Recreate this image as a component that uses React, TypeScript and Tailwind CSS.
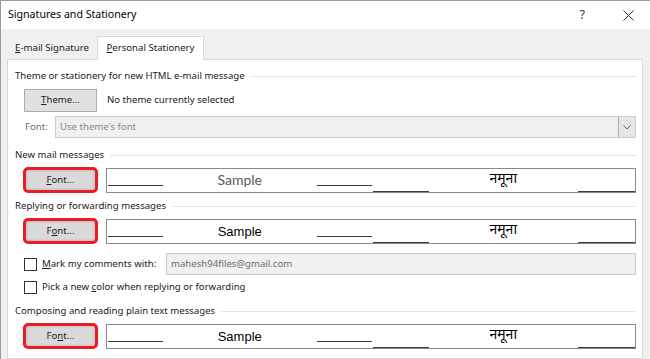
import { ReactElement } from "react";

// Outlook "Signatures and Stationery" dialog, Personal Stationery tab

const ui = { fontFamily: '"Noto Sans", "Open Sans", sans-serif' };

const SectionLabel = ({ text, className = "" }: { text: string; className?: string }): ReactElement => (
  <div className={`flex items-center h-4 ${className}`}>
    <span className="text-[9.6px] text-[#1a1a1a] whitespace-nowrap leading-none">{text}</span>
    <div className="flex-1 h-px bg-[#e3e3e3] ml-[6px]" />
  </div>
);

const RedFontButton = ({ pre, key1, post }: { pre: string; key1: string; post: string }): ReactElement => (
  <button className="ml-[8px] w-[75px] h-[26px] shrink-0 rounded-[5px] border-[3px] border-[#ea1c24] bg-[#dadada] shadow-[inset_0_0_3px_rgba(0,0,0,0.25)] flex items-center justify-center text-[9.6px] text-[#1a1a1a] leading-none">
    {pre}<span className="underline">{key1}</span>{post}
  </button>
);

const SampleBox = ({ light }: { light?: boolean }): ReactElement => (
  <div className="ml-2 flex-1 h-[25px] border border-[#8a8a8a] flex">
    <div className="flex-1 flex items-end pl-px">
      <div className="w-[55px] h-px bg-[#3c3c3c] mb-[6px]" />
      <div className="flex-1 self-center text-center -mt-[3px]">
        {light ? (
          <span className="text-[14px] text-[#595959]" style={{ fontFamily: "Lato, sans-serif" }}>Sample</span>
        ) : (
          <span className="text-[13px] text-black" style={{ fontFamily: '"Liberation Sans", Arial, sans-serif' }}>Sample</span>
        )}
      </div>
      <div className="w-[55px] h-px bg-[#3c3c3c] mb-[6px]" />
    </div>
    <div className="flex-1 flex items-end">
      <div className="w-[56px] h-px bg-[#3c3c3c] ml-px" />
      <div className="flex-1 self-center text-center text-[14px] text-black leading-none" style={{ fontFamily: '"Noto Sans Devanagari", "Noto Sans", sans-serif' }}>नमूना</div>
      <div className="w-[57px] h-px bg-[#3c3c3c]" />
    </div>
  </div>
);

const Checkbox = (): ReactElement => (
  <div className="ml-[9px] w-[13px] h-[13px] border border-[#333] bg-white shrink-0" />
);

const App = (): ReactElement => {
  return (
    <div className="w-[650px] h-[359px] overflow-hidden bg-[#f0f0f0] border-t border-l border-[#9a9a9a] flex flex-col" style={ui}>
      {/* title bar */}
      <div className="h-[28px] bg-white flex items-center shrink-0">
        <span className="ml-[7px] text-[10.6px] text-black">Signatures and Stationery</span>
        <div className="flex-1" />
        <span className="text-[12px] text-[#333] mr-[38px]">?</span>
        <svg width="11" height="11" viewBox="0 0 11 11" className="mr-[16px]">
          <path d="M0.5 0.5 L10.5 10.5 M10.5 0.5 L0.5 10.5" stroke="#333" strokeWidth="1" />
        </svg>
      </div>

      {/* tabs */}
      <div className="flex items-end h-[30px] pl-[6px] shrink-0">
        <div className="h-[22px] w-[90px] flex items-center justify-center text-[9.6px] text-[#1a1a1a]">
          <span><span className="underline">E</span>-mail Signature</span>
        </div>
        <div className="h-[24px] w-[107px] bg-white border border-b-0 border-[#d9d9d9] flex items-center justify-center text-[9.6px] text-[#1a1a1a] -mb-px relative z-10">
          <span><span className="underline">P</span>ersonal Stationery</span>
        </div>
      </div>

      {/* panel */}
      <div className="ml-[6px] mr-[7px] flex-1 bg-white border border-[#d9d9d9] pl-[7px] pr-[6px] pt-[8px]">
        <SectionLabel text="Theme or stationery for new HTML e-mail message" />
        <div className="flex items-center mt-[5px]">
          <button className="ml-[9px] w-[73px] h-[23px] bg-[#e1e1e1] border border-[#adadad] text-[9.6px] text-[#1a1a1a]">
            <span className="underline">T</span>heme...
          </button>
          <span className="ml-[10px] text-[9.6px] text-[#1a1a1a]">No theme currently selected</span>
        </div>
        <div className="flex items-center mt-[4px]">
          <span className="ml-[10px] w-[30px] text-[9.6px] text-[#6d6d6d]">Font:</span>
          <div className="flex-1 h-[22px] bg-[#f0f0f0] border border-[#cccccc] flex items-center">
            <span className="ml-[4px] text-[9.6px] text-[#8a8a8a] flex-1">Use theme's font</span>
            <div className="w-[17px] h-[20px] bg-[#e6e6e6] border-l border-[#adadad] flex items-center justify-center">
              <svg width="8" height="5" viewBox="0 0 8 5"><path d="M0.5 0.5 L4 4 L7.5 0.5" stroke="#666" fill="none" strokeWidth="1" /></svg>
            </div>
          </div>
        </div>

        <SectionLabel text="New mail messages" className="mt-[9px]" />
        <div className="flex items-center mt-[4px]">
          <RedFontButton pre="" key1="F" post="ont..." />
          <SampleBox light />
        </div>

        <SectionLabel text="Replying or forwarding messages" className="mt-[5px]" />
        <div className="flex items-center mt-[4px]">
          <RedFontButton pre="F" key1="o" post="nt..." />
          <SampleBox />
        </div>

        <div className="flex items-center mt-[9px]">
          <Checkbox />
          <span className="ml-[5px] w-[124px] whitespace-nowrap text-[9.6px] text-[#1a1a1a]"><span className="underline">M</span>ark my comments with:</span>
          <div className="flex-1 h-[22px] bg-[#f0f0f0] border border-[#cccccc] flex items-center">
            <span className="ml-[4px] text-[9.6px] text-[#6d6d6d]">mahesh94files@gmail.com</span>
          </div>
        </div>
        <div className="flex items-center mt-[5px] h-[15px]">
          <Checkbox />
          <span className="ml-[5px] whitespace-nowrap text-[9.6px] text-[#1a1a1a]">Pick a new <span className="underline">c</span>olor when replying or forwarding</span>
        </div>

        <SectionLabel text="Composing and reading plain text messages" className="mt-[8px]" />
        <div className="flex items-center mt-[4px]">
          <RedFontButton pre="Fo" key1="n" post="t..." />
          <SampleBox />
        </div>
      </div>
    </div>
  );
};

export default App;
